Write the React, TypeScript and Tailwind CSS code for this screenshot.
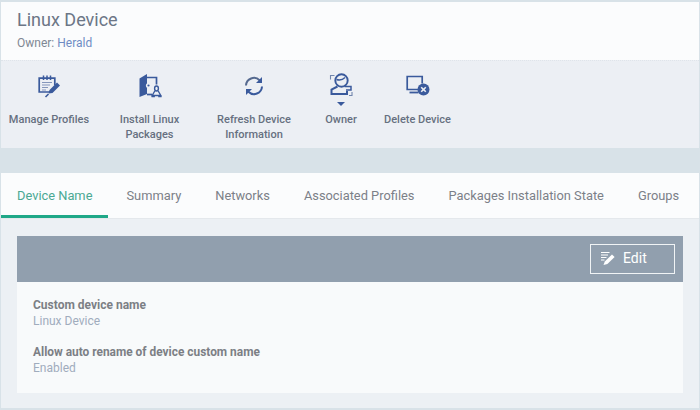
const font = "font-['Roboto','Liberation_Sans',sans-serif]";

function ManageIcon() {
  return (
    <svg width="24" height="24" viewBox="0 0 24 24" fill="none">
      <path d="M14 18H2.2V4.2h15.6v7" stroke="#3a5a9c" strokeWidth="1.7" />
      <path d="M6.5 1.5v4.5M10 1.5v4.5M13.5 1.5v4.5" stroke="#3a5a9c" strokeWidth="1.5" />
      <path d="M5 8.5h10M5 11h8M5 13.5h6M5 16h4" stroke="#8496bb" strokeWidth="1.2" />
      <path d="M11.5 19.5l1-3.5 7.5-7.5 3 3-7.5 7.5z" fill="#3a5a9c" />
      <path d="M8.5 23l3-3" stroke="#3a5a9c" strokeWidth="1.6" />
    </svg>
  );
}

function InstallIcon() {
  return (
    <svg width="24" height="26" viewBox="0 0 24 26" fill="none">
      <path d="M1.5 5.5L9 1v20l-7.5 3z" fill="#3a5a9c" />
      <path d="M9 4.5h9.5v7" stroke="#3a5a9c" strokeWidth="1.7" />
      <path d="M9 21.5h5" stroke="#3a5a9c" strokeWidth="1.7" />
      <circle cx="10.5" cy="12.5" r="2.6" fill="#eceff4" />
      <circle cx="10.5" cy="12.5" r="1.1" fill="#3a5a9c" />
      <ellipse cx="18.5" cy="15.5" rx="1.9" ry="2.5" stroke="#3a5a9c" strokeWidth="1.4" />
      <path d="M16.8 18l-2.6 4.5h8.6L20.2 18" stroke="#3a5a9c" strokeWidth="1.4" />
      <path d="M13.5 23.5h3.4M20.2 23.5h3.4" stroke="#3a5a9c" strokeWidth="1.6" />
    </svg>
  );
}

function RefreshIcon() {
  return (
    <svg width="22" height="22" viewBox="0 0 22 22" fill="none">
      <path d="M3 10.5A8 8 0 0 1 16.6 5.2" stroke="#55698f" strokeWidth="2" />
      <path d="M19 11.5A8 8 0 0 1 5.4 16.8" stroke="#3a5a9c" strokeWidth="2" />
      <path d="M19 2v6h-6z" fill="#3a5a9c" />
      <path d="M3 20v-6h6z" fill="#3a5a9c" />
    </svg>
  );
}

function OwnerIcon() {
  return (
    <svg width="24" height="26" viewBox="0 0 24 26" fill="none">
      <path d="M1.5 6.5V2.5h4M23 19v3.5h-3" stroke="#7286ad" strokeWidth="1.1" />
      <circle cx="12.5" cy="7.5" r="6.2" stroke="#3a5a9c" strokeWidth="1.9" />
      <path d="M7.5 6.5c3 1 6 .5 8.5-2" stroke="#3a5a9c" strokeWidth="1.4" />
      <path d="M8.5 13.5L2.5 16.5V21h15.5v-3" stroke="#3a5a9c" strokeWidth="2" />
      <path d="M15.5 13.5h6.5v3.5h-5" stroke="#3a5a9c" strokeWidth="1.5" />
    </svg>
  );
}

function DeleteIcon() {
  return (
    <svg width="24" height="22" viewBox="0 0 24 22" fill="none">
      <path d="M12.5 14.5H1.2V1.5h15v7" stroke="#3a5a9c" strokeWidth="1.7" />
      <path d="M3.5 17.5h9" stroke="#3a5a9c" strokeWidth="1.8" />
      <circle cx="17.5" cy="14.5" r="6" fill="#3a5a9c" />
      <path d="M15.2 12.2l4.6 4.6M19.8 12.2l-4.6 4.6" stroke="#eceff4" strokeWidth="1.6" />
    </svg>
  );
}

function EditIcon() {
  return (
    <svg width="16" height="16" viewBox="0 0 16 16" fill="none">
      <path d="M1 2.5h8.5M1 5h7M1 7.5h5.5M1 10h3.5" stroke="#fff" strokeWidth="1" />
      <path d="M3.5 15l1.3-3.6 7.2-7 2.6 2.6-7.2 7z" fill="#fff" />
    </svg>
  );
}

const actions = [
  { label: ["Manage Profiles"], icon: <ManageIcon />, width: "w-[96px]" },
  { label: ["Install Linux", "Packages"], icon: <InstallIcon />, width: "w-[105px]" },
  { label: ["Refresh Device", "Information"], icon: <RefreshIcon />, width: "w-[104px]" },
  { label: ["Owner"], icon: <OwnerIcon />, width: "w-[70px]", caret: true },
  { label: ["Delete Device"], icon: <DeleteIcon />, width: "w-[83px]" },
];

const tabs = ["Device Name", "Summary", "Networks", "Associated Profiles", "Packages Installation State", "Groups"];

export default function App() {
  return (
    <div className={`${font} h-[410px] w-[700px] overflow-hidden bg-[#d8e2e8] px-px pt-[2px] pb-[2px]`}>
      <div className="flex h-[58px] flex-col bg-[#fbfcfd] pl-4 pt-[7px]">
        <h1 className="text-[18px] leading-[22px] font-normal text-[#6c7686]">Linux Device</h1>
        <p className="mt-[4px] text-[12px] leading-[16px] text-[#7f8894]">
          Owner: <span className="text-[#6f8cc4]">Herald</span>
        </p>
      </div>

      <div className="flex h-[88px] items-start border-t border-dotted border-[#dfe4ea] bg-[#eceff4] pt-[9px]">
        {actions.map((a) => (
          <div key={a.label[0]} className={`${a.width} relative flex flex-col items-center`}>
            <div className="flex h-[31px] items-center justify-center">{a.icon}</div>
            {a.caret && (
              <div className="absolute top-[32px] h-0 w-0 border-x-[4px] border-t-[4px] border-x-transparent border-t-[#3a5a9c]" />
            )}
            <div className="mt-[11px] text-center text-[11px] leading-[15px] font-medium whitespace-nowrap text-[#667080]">
              {a.label.map((l) => (
                <div key={l}>{l}</div>
              ))}
            </div>
          </div>
        ))}
      </div>

      <div className="mt-[25px] flex h-[46px] items-stretch border-b border-[#e4e8ec] bg-[#fbfcfd]">
        {tabs.map((t, i) => (
          <div
            key={t}
            className={`flex items-center text-[12.85px] whitespace-nowrap ${
              i === 0
                ? "mr-[1px] border-b-[3px] border-[#1fa888] pt-[3px] pr-[16px] pl-[16px] text-[#4aa893]"
                : "px-[17px] text-[#7b8088]"
            }`}
          >
            {t}
          </div>
        ))}
      </div>

      <div className="h-[189px] bg-[#ecf0f4] px-4 pt-[17px]">
        <div className="flex h-[46px] items-center justify-end bg-[#919fae] pr-2">
          <button className="flex h-[30px] w-[85px] items-center gap-[7px] border border-[#f0f3f5] pb-[2px] pl-[9px] text-[14px] text-white">
            <EditIcon />
            Edit
          </button>
        </div>
        <div className="h-[111px] bg-[#f8fafb] pl-4 pt-[15px]">
          <div className="text-[12px] leading-[16px] font-bold text-[#7c7f85]">Custom device name</div>
          <div className="text-[12px] leading-[16px] text-[#a0acbd]">Linux Device</div>
          <div className="mt-[15px] text-[11.9px] leading-[16px] font-bold text-[#7c7f85]">Allow auto rename of device custom name</div>
          <div className="text-[12px] leading-[16px] text-[#a0acbd]">Enabled</div>
        </div>
      </div>
    </div>
  );
}
